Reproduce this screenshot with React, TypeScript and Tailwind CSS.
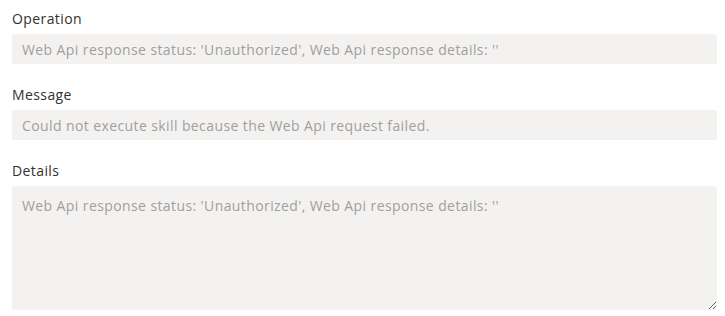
import React from "react";

const fields = [
  {
    label: "Operation",
    value: "Web Api response status: 'Unauthorized', Web Api response details: ''",
  },
  {
    label: "Message",
    value: "Could not execute skill because the Web Api request failed.",
  },
];

export default function App() {
  return (
    <div
      className="min-h-[316px] bg-white pl-3 pr-2 pt-1 text-[14px] tracking-[0.4px] text-[#323130]"
      style={{ fontFamily: "'Open Sans', 'Noto Sans', sans-serif" }}
    >
      <div className="flex flex-col gap-4">
        {fields.map((field) => (
          <div key={field.label} className="flex flex-col">
            <label className="py-[5px] leading-5">{field.label}</label>
            <div className="h-[30px] truncate rounded-[2px] bg-[#f3f2f1] pl-[10px] pt-[6px] leading-5 text-[#a19f9d]">
              {field.value}
            </div>
          </div>
        ))}
        <div className="flex flex-col">
          <label className="py-[5px] leading-5">Details</label>
          <textarea
            readOnly
            className="h-[124px] w-full resize-y rounded-[2px] bg-[#f3f2f1] pl-[10px] pt-[10px] leading-5 tracking-[0.4px] text-[#a19f9d] outline-none"
            value="Web Api response status: 'Unauthorized', Web Api response details: ''"
          />
        </div>
      </div>
    </div>
  );
}
